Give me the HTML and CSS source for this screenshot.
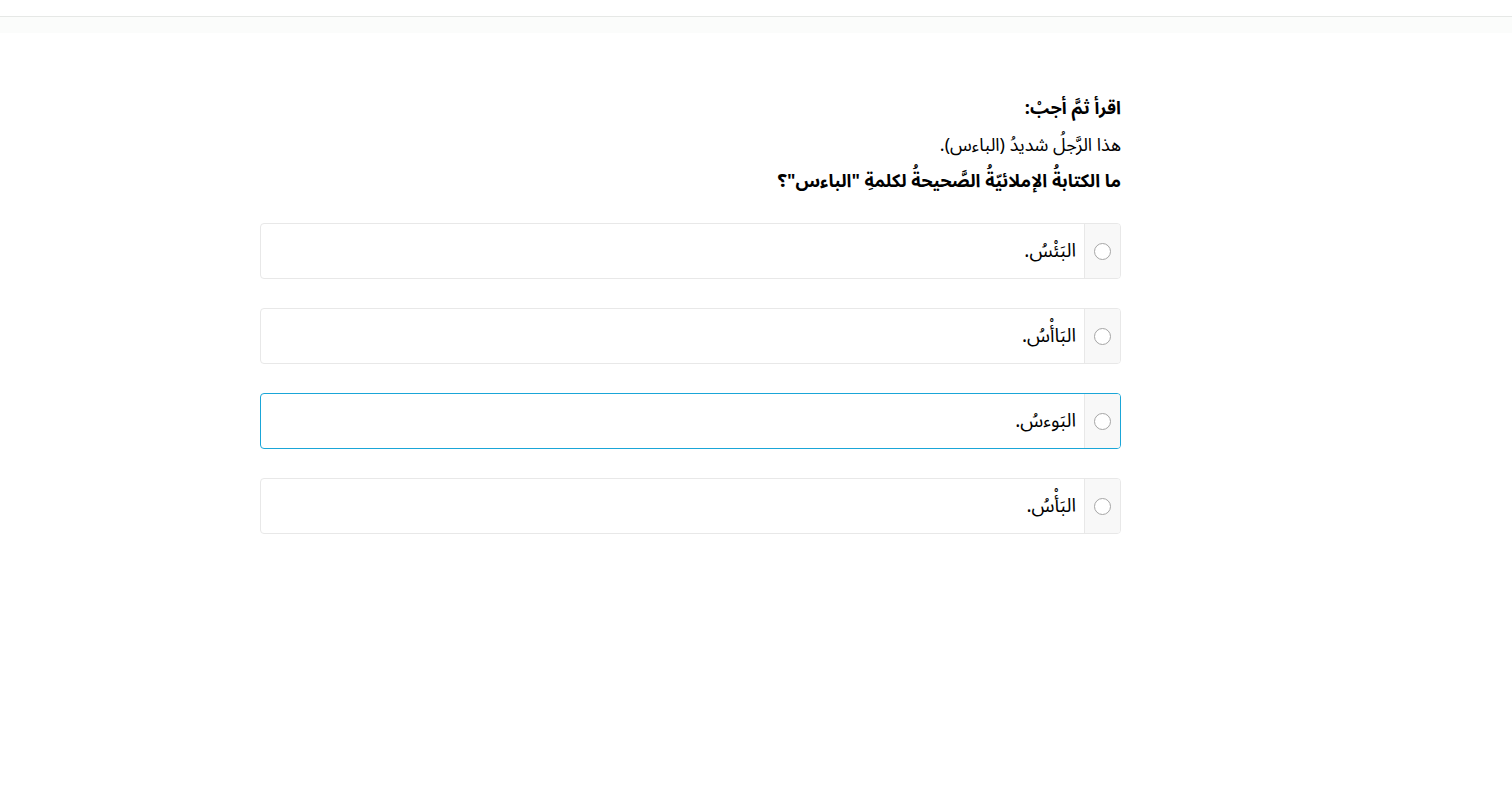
FILE: index.html
```html
<!DOCTYPE html>
<html lang="ar" dir="rtl">
<head>
<meta charset="utf-8">
<link rel="stylesheet" href="styles.css">
</head>
<body>
<div class="topbar"></div>
<div class="strip"></div>
<main class="wrap">
  <div class="question">
    <p class="q-title">اقرأ ثمَّ أجبْ:</p>
    <p class="q-text">هذا الرَّجلُ شديدُ (الباءس).</p>
    <p class="q-title">ما الكتابةُ الإملائيّةُ الصَّحيحةُ لكلمةِ "الباءس"؟</p>
  </div>
  <div class="options">
    <label class="opt"><span class="radio-cell"><span class="radio"></span></span><span class="opt-text">البَئْسُ.</span></label>
    <label class="opt"><span class="radio-cell"><span class="radio"></span></span><span class="opt-text">البَاأْسُ.</span></label>
    <label class="opt active"><span class="radio-cell"><span class="radio"></span></span><span class="opt-text">البَوءسُ.</span></label>
    <label class="opt"><span class="radio-cell"><span class="radio"></span></span><span class="opt-text">البَأْسُ.</span></label>
  </div>
</main>
</body>
</html>
```
FILE: styles.css
```css
html, body { margin: 0; padding: 0; background: #fff; }
body { font-family: "Noto Sans Arabic", "DejaVu Sans", sans-serif; color: #000; }
.topbar { height: 16px; border-bottom: 1px solid #e6e8e6; background: #fff; }
.strip { height: 16px; background: #fbfcfb; }
.wrap { width: 861px; margin-right: 391px; padding-top: 57px; }
.question p { margin: 0; font-size: 18px; line-height: 36px; }
.q-title { font-weight: bold; }
.question p:nth-child(2) { margin-top: 2px; line-height: 35px; }
.options { margin-top: 24px; display: flex; flex-direction: column; gap: 29px; }
.opt { display: flex; height: 54px; border: 1px solid #e8e8e8; border-radius: 4px; overflow: hidden; cursor: pointer; }
.opt.active { border-color: #1aa6d8; }
.radio-cell { width: 35px; background: #f8f8f8; border-left: 1px solid #e8e8e8; display: flex; align-items: center; justify-content: center; }
.radio { width: 17px; height: 17px; border: 1px solid #a5a5a5; border-radius: 50%; background: #fff; box-sizing: border-box; }
.opt-text { display: flex; align-items: center; padding-right: 8px; font-size: 19px; }
```
